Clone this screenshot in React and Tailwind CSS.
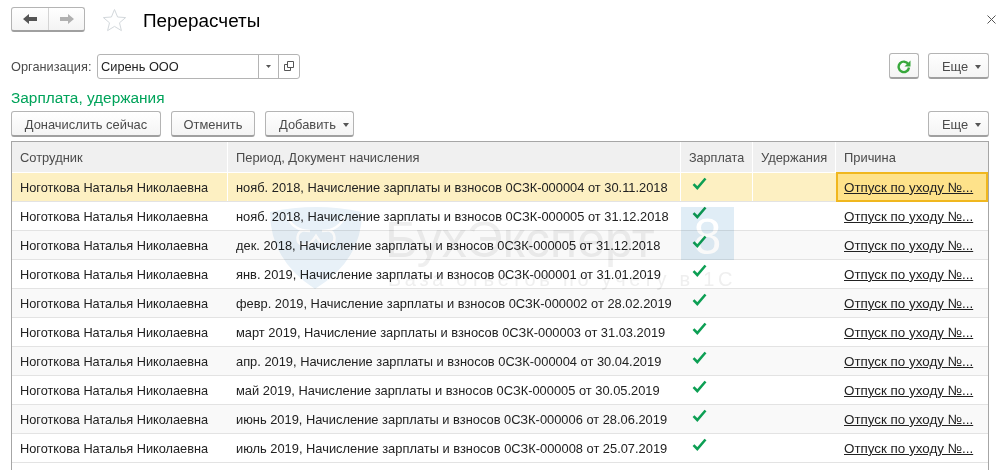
import React from 'react';

const rows = [
  ['нояб. 2018', '0СЗК-000004', '30.11.2018'],
  ['нояб. 2018', '0СЗК-000005', '31.12.2018'],
  ['дек. 2018', '0СЗК-000005', '31.12.2018'],
  ['янв. 2019', '0СЗК-000001', '31.01.2019'],
  ['февр. 2019', '0СЗК-000002', '28.02.2019'],
  ['март 2019', '0СЗК-000003', '31.03.2019'],
  ['апр. 2019', '0СЗК-000004', '30.04.2019'],
  ['май 2019', '0СЗК-000005', '30.05.2019'],
  ['июнь 2019', '0СЗК-000006', '28.06.2019'],
  ['июль 2019', '0СЗК-000008', '25.07.2019'],
];

const Caret = () => (
  <svg width="6" height="4" viewBox="0 0 6 4" className="shrink-0">
    <path d="M0 0h6L3 4z" fill="#555" />
  </svg>
);

const Button = ({ className = '', children }) => (
  <div
    className={`h-[26px] flex items-center rounded-[3px] border border-[#b4b4b4] border-b-2 border-b-[#a0a0a0] bg-gradient-to-b from-white to-[#f4f4f4] text-[#4b4b4b] text-[12.9px] pt-[2px] shrink-0 ${className}`}
  >
    {children}
  </div>
);

const Check = () => (
  <svg width="15" height="13" viewBox="0 0 15 13" className="block">
    <path d="M1.5 7.2 5.3 11 13.5 1.5" fill="none" stroke="#0d9f54" strokeWidth="2.6" />
  </svg>
);

const Watermark = () => (
  <div className="absolute left-[270px] top-[200px] w-[470px] h-[95px] pointer-events-none mix-blend-multiply">
    <svg width="92" height="84" viewBox="0 0 92 84" className="absolute left-0 top-[6px]">
      <path d="M0 6Q46-4 92 6 92 54 45 83 0 54 0 6z" fill="#e8f1f8" />
      <path d="M18 10c2 10 12 15 22 15M74 10c-2 10-12 15-22 15M34 24c-8 2-9 13-1 15 6 1 10-4 13-9 3 5 7 10 13 9 8-2 7-13-1-15" fill="none" stroke="#fff" strokeWidth="2.5" />
    </svg>
    <div className="absolute left-[115px] top-[10px] text-[50px] leading-[60px] text-[#efefef] whitespace-nowrap">
      БухЭксперт
    </div>
    <div className="absolute left-[411px] top-[7px] w-[53px] h-[53px] bg-[#e0edf6] flex items-center justify-center pt-[6px] text-[50px] leading-none text-white">
      8
    </div>
    <div className="absolute left-[118px] top-[67px] text-[20px] leading-[24px] tracking-[3.7px] text-[#efefef] whitespace-nowrap">
      База ответов по учету в 1С
    </div>
  </div>
);

export default function App() {
  return (
    <div className="relative w-[1005px] h-[470px] overflow-hidden bg-white font-['Liberation_Sans',Arial,sans-serif] text-[12.8px] text-[#333]">
      <div className="flex items-center pl-[11px] pr-[9px] pt-[7px] h-[32px]">
        <div className="flex w-[74px] h-[25px] rounded-[3px] border border-[#b4b4b4] border-b-2 border-b-[#a0a0a0] bg-gradient-to-b from-white to-[#f4f4f4]">
          <div className="w-[37px] flex items-center justify-center border-r border-[#d4d4d4]">
            <svg width="14" height="10" viewBox="0 0 14 10"><path d="M0 5 6 0v3h8v4H6v3z" fill="#555" /></svg>
          </div>
          <div className="flex-1 flex items-center justify-center">
            <svg width="14" height="10" viewBox="0 0 14 10"><path d="M14 5 8 0v3H0v4h8v3z" fill="#b0b0b0" /></svg>
          </div>
        </div>
        <svg width="25" height="24" viewBox="0 0 25 24" className="ml-[17px]">
          <path d="M12.5 1.5 15.6 9l8 .6-6.1 5.2 1.9 7.8-6.9-4.2-6.9 4.200 1.900-7.800L1.400 9.600l8-.6z" fill="none" stroke="#d3d8dc" strokeWidth="1" />
        </svg>
        <div className="ml-[16px] mt-[2px] text-[18.9px] leading-[24px] text-black">Перерасчеты</div>
        <svg width="9" height="9" viewBox="0 0 9 9" className="ml-auto">
          <path d="M.5.5l8 8M8.500.5l-8 8" stroke="#555" strokeWidth="1" />
        </svg>
      </div>

      <div className="flex items-center pl-[11px] pr-[16px] mt-[21px] h-[26px]">
        <div className="w-[86px] pt-[2px] text-[12.75px] text-[#4b4b4b]">Организация:</div>
        <div className="flex w-[203px] h-[25px] rounded-[3px] border border-[#b4b4b4] bg-white">
          <div className="flex-1 flex items-center pl-[3px] pt-[2px] text-[#222]">Сирень ООО</div>
          <div className="w-[20px] flex items-center justify-center border-l border-[#b4b4b4]">
            <svg width="5" height="3" viewBox="0 0 5 3"><path d="M0 0h5L2.500 3z" fill="#555" /></svg>
          </div>
          <div className="w-[21px] flex items-center justify-center border-l border-[#b4b4b4]">
            <svg width="10" height="10" viewBox="0 0 10 10">
              <path d="M3.500.5h6v6h-6zM3.500 3.500H.5v6h6V6.500" fill="none" stroke="#555" strokeWidth="1" />
            </svg>
          </div>
        </div>
        <Button className="w-[30px] ml-auto justify-center">
          <svg width="14" height="14" viewBox="0 0 14 14">
            <path d="M11.300 4.200A5.200 5.200 0 1 0 12 7.500" fill="none" stroke="#38a83c" strokeWidth="2.400" />
            <path d="M13.500.5v6h-6z" fill="#38a83c" />
          </svg>
        </Button>
        <Button className="w-[61px] ml-[9px] gap-[7px] pl-[13px]">
          <span>Еще</span>
          <Caret />
        </Button>
      </div>

      <div className="pl-[11px] mt-[10px] h-[18px] text-[15.4px] leading-[18px] text-[#00a35a]">Зарплата, удержания</div>

      <div className="flex pl-[11px] pr-[16px] mt-[4px]">
        <Button className="w-[150px] justify-center">Доначислить сейчас</Button>
        <Button className="w-[84px] ml-[10px] justify-center">Отменить</Button>
        <Button className="w-[89px] ml-[10px] gap-[7px] pl-[13px]">
          <span>Добавить</span>
          <Caret />
        </Button>
        <Button className="w-[61px] ml-auto gap-[7px] pl-[13px]">
          <span>Еще</span>
          <Caret />
        </Button>
      </div>

      <div className="relative ml-[11px] mt-[4px] w-[978px] h-[340px] border border-[#a6a6a6]">
        <div className="flex h-[31px] bg-[#f0f0f0] border-b border-white text-[12.9px] text-[#4b4b4b]">
          <div className="w-[216px] flex items-center pl-[8px] pt-[2px] border-r border-white">Сотрудник</div>
          <div className="w-[453px] flex items-center pl-[8px] pt-[2px] border-r border-white">Период, Документ начисления</div>
          <div className="w-[72px] flex items-center pl-[8px] pt-[2px] border-r border-white text-[12.6px]">Зарплата</div>
          <div className="w-[83px] flex items-center pl-[8px] pt-[2px] border-r border-white">Удержания</div>
          <div className="flex-1 flex items-center pl-[8px] pt-[2px]">Причина</div>
        </div>
        {rows.map(([period, num, date], i) => (
          <div
            key={i}
            className={`flex h-[29px] border-b border-[#e3e3e3] text-[#222] ${i === 0 ? 'bg-[#fdf0c2]' : i % 2 === 0 ? 'bg-[#f9f9f9]' : 'bg-white'}`}
          >
            <div className={`w-[216px] flex items-center pl-[8px] pt-[2px] text-[12.75px] ${i === 0 ? 'border-r border-white' : ''}`}>Ноготкова Наталья Николаевна</div>
            <div className={`w-[453px] flex items-center pl-[8px] pt-[2px] text-[12.86px] ${i === 0 ? 'border-r border-white' : ''}`}>
              {period}, Начисление зарплаты и взносов {num} от {date}
            </div>
            <div className={`w-[72px] pl-[11px] pt-[4px] ${i === 0 ? 'border-r border-white' : ''}`}>
              <Check />
            </div>
            <div className="w-[83px]" />
            <div className={`flex-1 flex items-center pt-[2px] underline text-[13.4px] ${i === 0 ? 'bg-[#fee28a] border-2 border-[#f0b71e] -mt-px h-[30px] pl-[6px]' : 'pl-[8px]'}`}>
              Отпуск по уходу №...
            </div>
          </div>
        ))}
      </div>

      <Watermark />
    </div>
  );
}
